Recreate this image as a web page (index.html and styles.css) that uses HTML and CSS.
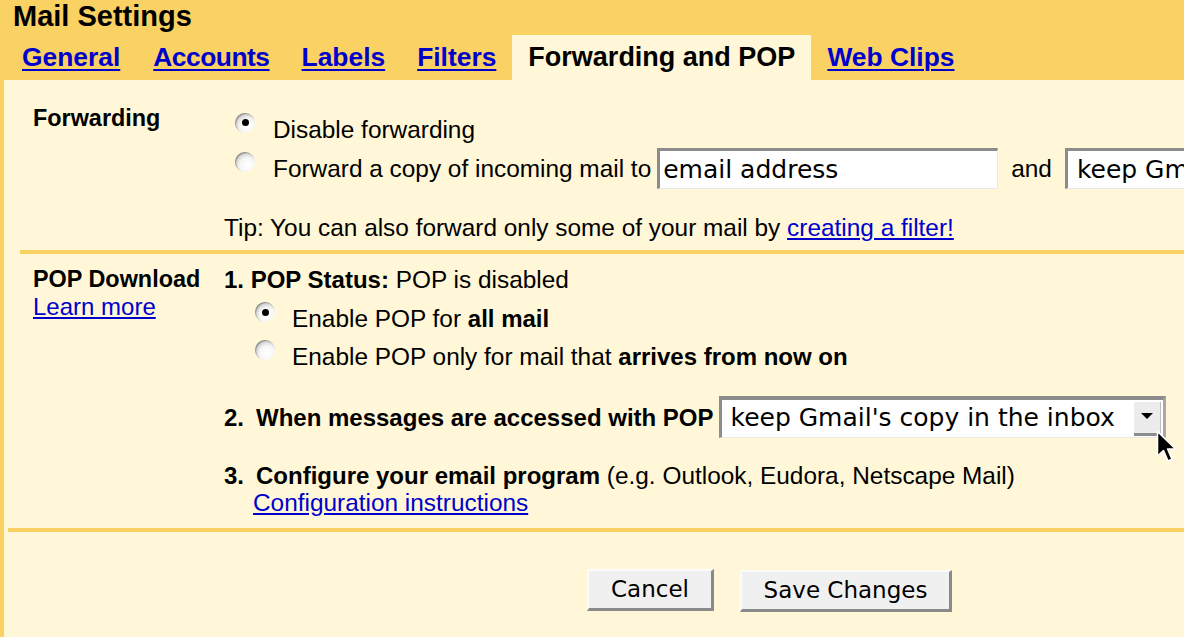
FILE: index.html
```html
<!DOCTYPE html>
<html>
<head>
<meta charset="utf-8">
<link rel="stylesheet" href="styles.css">
</head>
<body>
<div class="page">
  <div class="header">
    <div class="title">Mail Settings</div>
    <div class="tabs">
      <a class="tab" href="#">General</a>
      <a class="tab tight" href="#">Accounts</a>
      <a class="tab" href="#">Labels</a>
      <a class="tab" href="#">Filters</a>
      <span class="tab active">Forwarding and POP</span>
      <a class="tab" href="#">Web Clips</a>
    </div>
  </div>
  <div class="content">
    <div class="section fwd">
      <div class="label">Forwarding</div>
      <div class="value">
        <div class="opt opt-fwd1"><span class="radio on"></span><span>Disable forwarding</span></div>
        <div class="opt opt-fwd2"><span class="radio"></span><span>Forward a copy of incoming mail to</span><span class="field email">email address</span><span class="and">and</span><span class="field keep">keep Gmail's copy in the inbox</span></div>
        <div class="tip">Tip: You can also forward only some of your mail by <a href="#">creating a filter!</a></div>
      </div>
    </div>
    <div class="sep sep1"></div>
    <div class="section pop">
      <div class="label">POP Download<br><a href="#">Learn more</a></div>
      <div class="value">
        <div class="line"><b>1. POP Status:</b> POP is disabled</div>
        <div class="opt pop-opt first"><span class="radio on"></span><span>Enable POP for <b>all mail</b></span></div>
        <div class="opt pop-opt"><span class="radio"></span><span>Enable POP only for mail that <b>arrives from now on</b></span></div>
        <div class="step2"><b class="num">2.</b><b>When messages are accessed with POP</b><span class="select"><span class="seltext">keep Gmail's copy in the inbox</span><span class="arrow"></span></span></div>
        <div class="step3"><b class="num">3.</b><span><b>Configure your email program</b> (e.g. Outlook, Eudora, Netscape Mail)</span></div>
        <div class="config"><a href="#">Configuration instructions</a></div>
      </div>
    </div>
    <div class="sep sep2"></div>
    <div class="buttons">
      <span class="btn cancel">Cancel</span>
      <span class="btn save">Save Changes</span>
    </div>
  </div>
  <svg class="cursor" width="22" height="34" viewBox="0 0 22 34"><path d="M1.5 1.5 L1.5 26 L7.5 20.5 L12 31 L16 29.2 L11.6 19 L19.5 19 Z" fill="#000" stroke="#fff" stroke-width="1.6" stroke-linejoin="round"/></svg>
</div>
</body>
</html>
```
FILE: styles.css
```css
html, body {
  margin: 0;
  padding: 0;
  background: #fff7d7;
  overflow: hidden;
}
.page {
  position: relative;
  width: 1184px;
  height: 637px;
  overflow: hidden;
  font-family: "Liberation Sans", Arial, sans-serif;
  color: #000;
  display: flex;
  flex-direction: column;
}
a { color: #0000cc; }
.header {
  background: #fad163;
}
.title {
  font-weight: bold;
  font-size: 29px;
  line-height: 32px;
  height: 35px;
  padding-left: 13px;
  box-sizing: border-box;
}
.tabs {
  display: flex;
  height: 45px;
  padding-left: 6px;
}
.tab {
  font-weight: bold;
  font-size: 26.4px;
  line-height: 45px;
  padding: 0 16px;
  color: #0000cc;
  text-decoration-thickness: 2px;
  text-underline-offset: 3px;
}
.tab:first-child { padding-right: 17px; }
.tab.tight { letter-spacing: -0.5px; }
.tab.active {
  background: #fff7d7;
  color: #000;
  padding: 0 16px 0 16px;
  font-size: 27px;
}
.content {
  flex: 1;
  background: #fff7d7;
  border-left: 4px solid #fad163;
  font-size: 24.4px;
  line-height: 27px;
}
.content b { font-size: 24px; }
.section {
  display: grid;
  grid-template-columns: 220px 1fr;
}
.label {
  font-weight: bold;
  font-size: 23.4px;
  padding-left: 29px;
}
.label a { font-weight: normal; font-size: 24px; }
.fwd { padding: 25px 0 9px; }
.fwd .value { margin-top: 6px; }
.opt {
  display: flex;
  align-items: center;
  white-space: nowrap;
}
.opt-fwd1 { height: 36px; padding-left: 11px; }
.opt-fwd2 { height: 42px; padding-left: 11px; }
.radio {
  width: 20px;
  height: 20px;
  border-radius: 50%;
  box-sizing: border-box;
  margin-right: 18px;
  margin-bottom: 13px;
  background: radial-gradient(circle at 62% 66%, #ffffff 0%, #f6f6f6 42%, #cfcfcf 68%, #7a7a7a 100%);
  box-shadow: inset 1px 1px 1px rgba(0,0,0,0.3);
  display: flex;
  align-items: center;
  justify-content: center;
  flex: none;
}
.radio.on::after {
  content: "";
  width: 7px;
  height: 7px;
  border-radius: 50%;
  background: #000;
}
.field {
  height: 41px;
  box-sizing: border-box;
  background: #fff;
  border-top: 3px solid #8c8c8c;
  border-left: 3px solid #8c8c8c;
  border-right: 1px solid #e8e8e8;
  border-bottom: 1px solid #e8e8e8;
  font-family: "DejaVu Sans", Verdana, sans-serif;
  font-size: 25px;
  line-height: 37px;
  padding-left: 3px;
  flex: none;
}
.email {
  width: 341px;
  margin-left: 6px;
}
.and {
  margin-left: 13px;
  margin-right: 13px;
}
.keep { width: 460px; padding-left: 9px; }
.tip {
  margin-top: 25px;
  white-space: nowrap;
}
.sep {
  height: 4px;
  background: #fad163;
}
.sep1 { margin: 0 0 0 16px; }
.sep2 { margin: 0 0 0 4px; }
.pop { padding: 12px 0 12px; }
.line { white-space: nowrap; }
.pop-opt {
  height: 38px;
  padding-left: 31px;
}
.pop-opt.first { margin-top: 6px; }
.pop-opt .radio { margin-right: 17px; margin-bottom: 12px; }
.step2 {
  display: flex;
  align-items: center;
  margin-top: 21px;
  height: 42px;
  white-space: nowrap;
}
.num { width: 32px; flex: none; }
.select {
  margin-left: 5px;
  width: 447px;
  height: 42px;
  box-sizing: border-box;
  background: #fff;
  border-top: 4px solid #8c8c8c;
  border-left: 3px solid #8c8c8c;
  border-right: 3px solid #a8a8a8;
  border-bottom: 1px solid #e8e8e8;
  display: flex;
  align-items: stretch;
  justify-content: space-between;
  font-family: "DejaVu Sans", Verdana, sans-serif;
  font-size: 25px;
  line-height: 36px;
}
.seltext { padding-left: 9px; }
.arrow {
  width: 26px;
  margin: 2px 2px 1px 0;
  background: #ececec;
  border-bottom: 3px solid #8c8c8c;
  border-right: 1px solid #bbb;
  display: flex;
  align-items: center;
  justify-content: center;
  padding-bottom: 4px;
}
.arrow::after {
  content: "";
  border-left: 6px solid transparent;
  border-right: 6px solid transparent;
  border-top: 6px solid #000;
}
.step3 {
  display: flex;
  margin-top: 24px;
  white-space: nowrap;
}
.config { padding-left: 29px; }
.buttons {
  display: flex;
  gap: 26px;
  padding: 37px 0 0 583px;
}
.btn {
  height: 42px;
  box-sizing: border-box;
  background: #f0f0f0;
  border-top: 2px solid #fbfbfb;
  border-left: 2px solid #fbfbfb;
  border-right: 3px solid #8a8a8a;
  border-bottom: 3px solid #8a8a8a;
  font-family: "DejaVu Sans", Verdana, sans-serif;
  font-size: 23px;
  line-height: 36px;
  text-align: center;
}
.cancel { width: 127px; }
.save { width: 212px; margin-top: 1px; }
.cursor {
  position: absolute;
  left: 1156px;
  top: 430px;
}
```
